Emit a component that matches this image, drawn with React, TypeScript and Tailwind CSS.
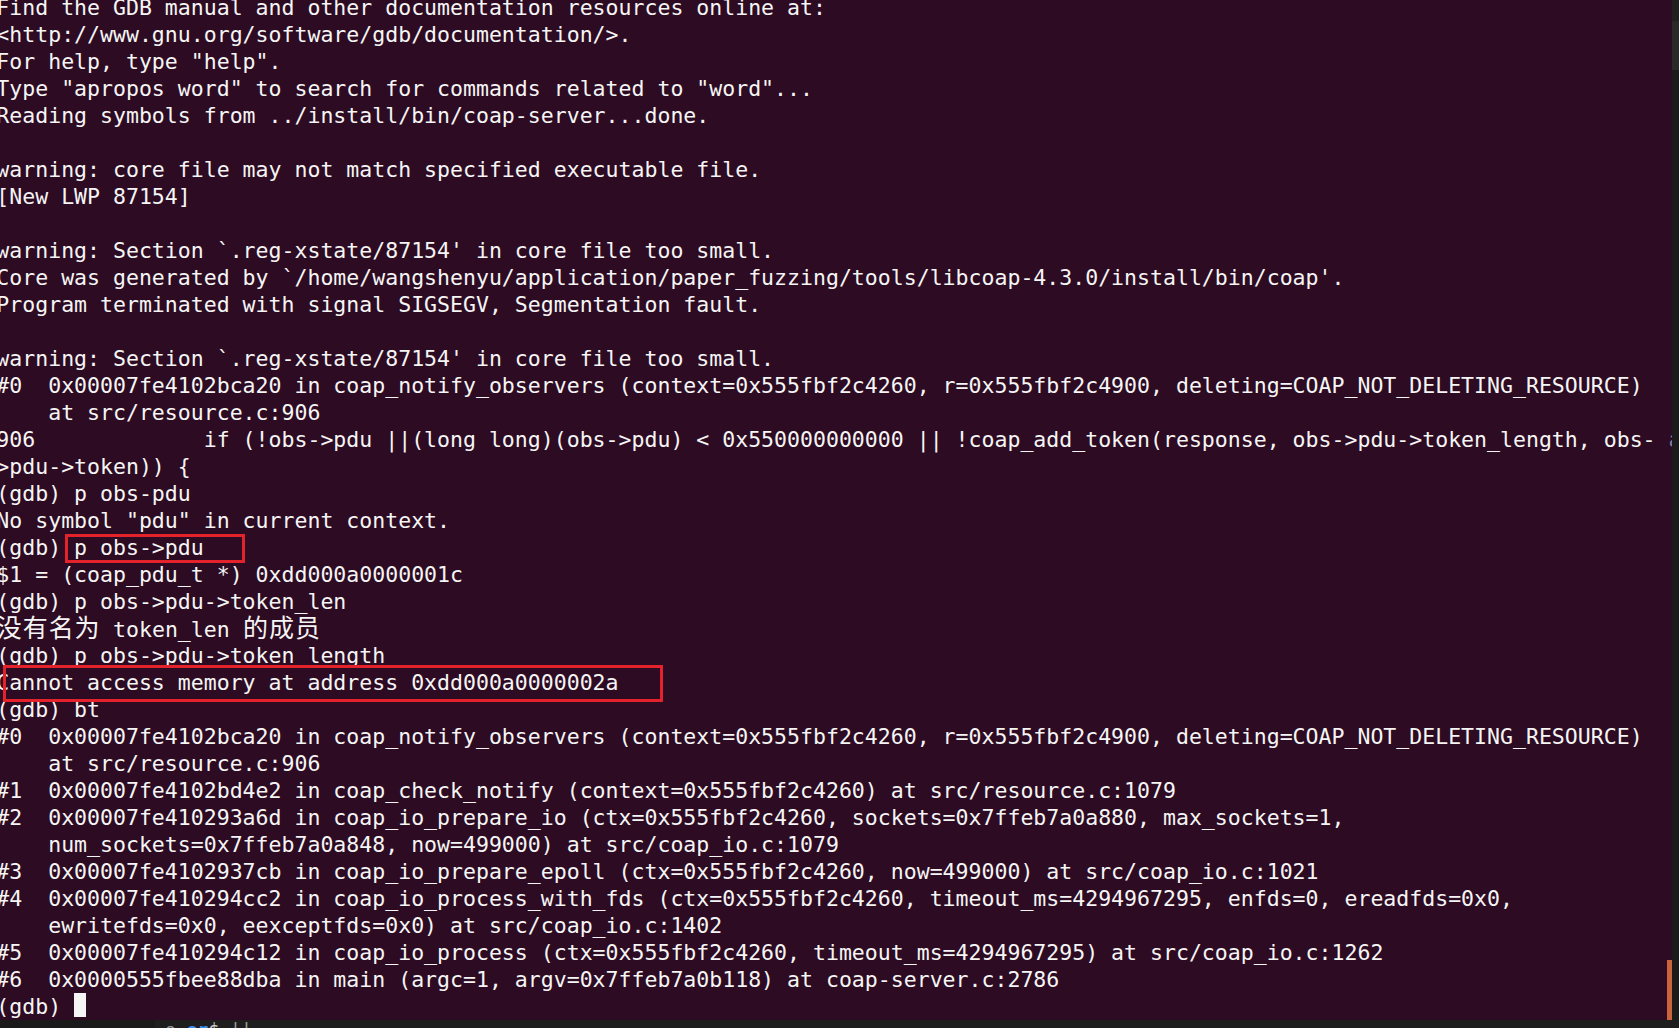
const lines: string[] = [
  "Find the GDB manual and other documentation resources online at:",
  "<http://www.gnu.org/software/gdb/documentation/>.",
  'For help, type "help".',
  'Type "apropos word" to search for commands related to "word"...',
  "Reading symbols from ../install/bin/coap-server...done.",
  "",
  "warning: core file may not match specified executable file.",
  "[New LWP 87154]",
  "",
  "warning: Section `.reg-xstate/87154' in core file too small.",
  "Core was generated by `/home/wangshenyu/application/paper_fuzzing/tools/libcoap-4.3.0/install/bin/coap'.",
  "Program terminated with signal SIGSEGV, Segmentation fault.",
  "",
  "warning: Section `.reg-xstate/87154' in core file too small.",
  "#0  0x00007fe4102bca20 in coap_notify_observers (context=0x555fbf2c4260, r=0x555fbf2c4900, deleting=COAP_NOT_DELETING_RESOURCE)",
  "    at src/resource.c:906",
  "@WRAP",
  ">pdu->token)) {",
  "(gdb) p obs-pdu",
  'No symbol "pdu" in current context.',
  "(gdb) p obs->pdu",
  "$1 = (coap_pdu_t *) 0xdd000a0000001c",
  "(gdb) p obs->pdu->token_len",
  "@CJK",
  "(gdb) p obs->pdu->token_length",
  "Cannot access memory at address 0xdd000a0000002a",
  "(gdb) bt",
  "#0  0x00007fe4102bca20 in coap_notify_observers (context=0x555fbf2c4260, r=0x555fbf2c4900, deleting=COAP_NOT_DELETING_RESOURCE)",
  "    at src/resource.c:906",
  "#1  0x00007fe4102bd4e2 in coap_check_notify (context=0x555fbf2c4260) at src/resource.c:1079",
  "#2  0x00007fe410293a6d in coap_io_prepare_io (ctx=0x555fbf2c4260, sockets=0x7ffeb7a0a880, max_sockets=1, ",
  "    num_sockets=0x7ffeb7a0a848, now=499000) at src/coap_io.c:1079",
  "#3  0x00007fe4102937cb in coap_io_prepare_epoll (ctx=0x555fbf2c4260, now=499000) at src/coap_io.c:1021",
  "#4  0x00007fe410294cc2 in coap_io_process_with_fds (ctx=0x555fbf2c4260, timeout_ms=4294967295, enfds=0, ereadfds=0x0, ",
  "    ewritefds=0x0, eexceptfds=0x0) at src/coap_io.c:1402",
  "#5  0x00007fe410294c12 in coap_io_process (ctx=0x555fbf2c4260, timeout_ms=4294967295) at src/coap_io.c:1262",
  "#6  0x0000555fbee88dba in main (argc=1, argv=0x7ffeb7a0b118) at coap-server.c:2786",
  "@PROMPT",
];

// CJK glyphs take two terminal columns (2 x 12.97px)
function Wide({ ch }: { ch: string }) {
  return <span className="inline-block w-[25.94px] text-center text-[25px]">{ch}</span>;
}

function Line({ text }: { text: string }) {
  if (text === "@WRAP") {
    return (
      <div className="h-[27px] whitespace-pre">
        {"906             if (!obs->pdu ||(long long)(obs->pdu) < 0x550000000000 || !coap_add_token(response, obs->pdu->token_length, obs- "}
        <span className="text-[#aab0d8]/70">a</span>
      </div>
    );
  }
  if (text === "@CJK") {
    return (
      <div className="h-[27px] whitespace-pre">
        {"没有名为".split("").map((c, i) => <Wide key={i} ch={c} />)}
        {" token_len "}
        {"的成员".split("").map((c, i) => <Wide key={"b" + i} ch={c} />)}
      </div>
    );
  }
  if (text === "@PROMPT") {
    return (
      <div className="h-[27px] whitespace-pre flex items-start">
        <span>{"(gdb) "}</span>
        <span className="inline-block w-[12px] h-[24px] bg-[#f5f5f5]" />
      </div>
    );
  }
  return <div className="h-[27px] whitespace-pre">{text || " "}</div>;
}

export default function App() {
  return (
    <div className="w-[1679px] h-[1028px] bg-[#2d0b22] overflow-hidden flex flex-col">
      <div className="flex flex-1 min-h-0">
        {/* terminal */}
        <div className="relative flex-1 overflow-hidden">
          <div
            className="mt-[-6px] ml-[-3.7px] text-[#f5f5f5] text-[21.54px] leading-[27px]"
            style={{ fontFamily: '"DejaVu Sans Mono", "Noto Sans CJK SC", monospace' }}
          >
            {lines.map((l, i) => (
              <Line key={i} text={l} />
            ))}
          </div>

          {/* annotation boxes */}
          <div className="absolute left-[65px] top-[534px] w-[180px] h-[29px] border-[3px] border-[#e3222b]" />
          <div className="absolute left-[3px] top-[665px] w-[660px] h-[37px] border-[3px] border-[#e3222b]" />

          {/* scroll position marker */}
          <div className="absolute right-0 bottom-0 w-[5px] h-[60px] bg-[#c9643b]" />
        </div>

        {/* right edge */}
        <div className="w-[7px] flex flex-col bg-[#1b1b1b]">
          <div className="h-[21px] bg-[#1f1f1f]" />
          <div className="h-[49px] bg-[#292929]" />
        </div>
      </div>

      {/* window below */}
      <div className="h-[8px] bg-[#1a1a1a] flex overflow-hidden">
        <div className="w-[155px]" />
        <div
          className="flex-1 bg-[#1e1e1e] pl-[10px] whitespace-pre text-[18px] leading-[22px] mt-[-1px] text-[#9a9a9a]"
          style={{ fontFamily: '"DejaVu Sans Mono", monospace' }}
        >
          <span>o </span>
          <span className="text-[#3b8eea] font-bold">er</span>
          <span className="text-[#d0d0d0]">$ </span>
          <span>||</span>
        </div>
      </div>
    </div>
  );
}
